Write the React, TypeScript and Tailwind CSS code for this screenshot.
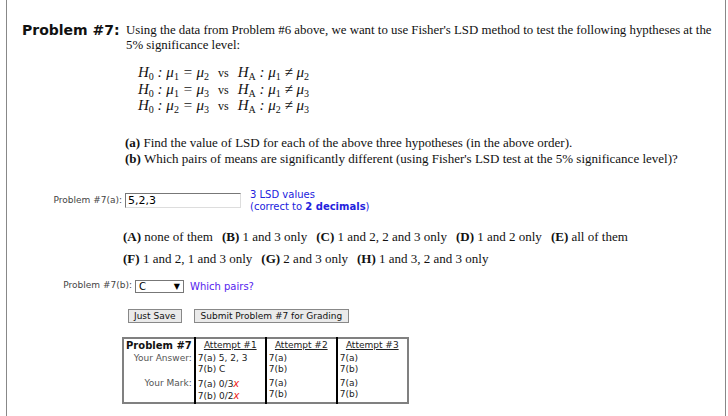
import React from 'react';

const serif = "font-['Liberation_Serif','Times_New_Roman',serif]";
const sans = "font-['DejaVu_Sans','Verdana',sans-serif]";

function Sub({ children }: { children: React.ReactNode }) {
  return <span className="not-italic text-[10px] relative top-[3px]">{children}</span>;
}

function Hyp({ a, b }: { a: string; b: string }) {
  return (
    <div className="italic text-[15px] leading-[14.5px] text-[#111] whitespace-nowrap">
      H<Sub>0</Sub>&nbsp;:&nbsp;μ<Sub>{a}</Sub> = μ<Sub>{b}</Sub>
      <span className="not-italic text-[12px]">&nbsp;&nbsp;&nbsp;vs&nbsp;&nbsp;&nbsp;</span>
      H<Sub>A</Sub>&nbsp;:&nbsp;μ<Sub>{a}</Sub> ≠ μ<Sub>{b}</Sub>
    </div>
  );
}

const options = [
  ['A', 'none of them'],
  ['B', '1 and 3 only'],
  ['C', '1 and 2, 2 and 3 only'],
  ['D', '1 and 2 only'],
  ['E', 'all of them'],
];
const options2 = [
  ['F', '1 and 2, 1 and 3 only'],
  ['G', '2 and 3 only'],
  ['H', '1 and 3, 2 and 3 only'],
];

function Opt({ k, t }: { k: string; t: string }) {
  return (
    <span className="mr-[9px]">
      <b>({k})</b> {t}
    </span>
  );
}

const cell = 'align-top border-l-2 border-black pl-[2px] pt-[2px] whitespace-nowrap';

export default function App() {
  return (
    <div className="w-[728px] h-[416px] bg-white overflow-hidden">
      <div className="ml-[6px] w-[720px] h-full border-x border-[#888] pt-[21px]">
        {/* Title */}
        <div className="flex">
          <div className={`${sans} w-[119px] pl-[15px] font-bold text-[14px] leading-[18px] text-[#111] whitespace-nowrap`}>
            Problem #7:
          </div>
          <div className={`${serif} w-[596px] text-[12.85px] leading-[15px] text-[#111] pt-[2px]`}>
            Using the data from Problem #6 above, we want to use Fisher's LSD method to test the following hyptheses at the 5% significance level:
          </div>
        </div>

        {/* Hypotheses */}
        <div className={`${serif} ml-[131px] mt-[12px]`}>
          <Hyp a="1" b="2" />
          <Hyp a="1" b="3" />
          <Hyp a="2" b="3" />
        </div>

        {/* Questions */}
        <div className={`${serif} ml-[118px] mt-[20px] text-[13px] leading-[16px] text-[#111]`}>
          <div><b>(a)</b> Find the value of LSD for each of the above three hypotheses (in the above order).</div>
          <div><b>(b)</b> Which pairs of means are significantly different (using Fisher's LSD test at the 5% significance level)?</div>
        </div>

        {/* Part a input */}
        <div className={`${sans} flex items-center mt-[22px]`}>
          <div className="w-[118px] text-right pr-[3px] text-[9px] text-[#444]">Problem #7(a):</div>
          <div className="w-[116px] h-[15px] border border-t-[#777] border-l-[#777] border-b-[#ddd] border-r-[#ddd] text-[11px] leading-[13px] pl-[2px] text-black">
            5,2,3
          </div>
          <div className="ml-[9px] text-[10px] leading-[12px] text-[#2222dd]">
            <div>3 LSD values</div>
            <div>(correct to <b>2 decimals</b>)</div>
          </div>
        </div>

        {/* Options */}
        <div className={`${serif} ml-[116px] mt-[13px] text-[13px] leading-[22px] text-[#111]`}>
          <div>
            {options.map(([k, t]) => (
              <Opt key={k} k={k} t={t} />
            ))}
          </div>
          <div>
            {options2.map(([k, t]) => (
              <Opt key={k} k={k} t={t} />
            ))}
          </div>
        </div>

        {/* Part b select */}
        <div className={`${sans} flex items-center mt-[9px]`}>
          <div className="w-[128px] text-right pr-[3px] text-[9px] text-[#444]">Problem #7(b):</div>
          <div className="w-[49px] h-[13px] border border-[#777] flex items-center justify-between px-[3px] text-[10px] leading-[11px] text-black">
            <span>C</span>
            <span className="text-[8px]">▼</span>
          </div>
          <div className="ml-[6px] text-[10px] text-[#5522ee]">Which pairs?</div>
        </div>

        {/* Buttons */}
        <div className={`${sans} flex ml-[121px] mt-[15px] gap-[12px]`}>
          <button className="h-[14px] px-[5px] border border-[#888] bg-[#eaeaea] text-[9px] leading-[12px] text-[#111]">Just Save</button>
          <button className="h-[14px] px-[6px] border border-[#888] bg-[#eaeaea] text-[9px] leading-[12px] text-[#111]">Submit Problem #7 for Grading</button>
        </div>

        {/* Results table */}
        <table className={`${sans} ml-[115px] mt-[14px] border-collapse border-2 border-[#808080] text-[9px] leading-[11px] text-[#222]`}>
          <tbody>
            <tr>
              <td className="w-[69px] text-center font-bold text-[10px] text-[#111] px-[2px] pt-[1px] whitespace-nowrap">Problem #7</td>
              <td className="w-[71px] border-l-2 border-black text-center underline pt-[1px] whitespace-nowrap">Attempt #1</td>
              <td className="w-[71px] border-l-2 border-black text-center underline pt-[1px] whitespace-nowrap">Attempt #2</td>
              <td className="w-[71px] border-l-2 border-black text-center underline pt-[1px] whitespace-nowrap">Attempt #3</td>
            </tr>
            <tr>
              <td className="align-top text-right pr-[2px] pt-[2px] text-[#555] whitespace-nowrap">Your Answer:</td>
              <td className={cell}>7(a) 5, 2, 3<br />7(b) C</td>
              <td className={cell}>7(a)<br />7(b)</td>
              <td className={cell}>7(a)<br />7(b)</td>
            </tr>
            <tr>
              <td className="align-top text-right pr-[2px] pt-[3px] text-[#555] whitespace-nowrap">Your Mark:</td>
              <td className={`${cell} pt-[3px]`}>
                7(a) 0/3<span className="text-[#ee2222] italic text-[10px]">x</span>
                <br />
                7(b) 0/2<span className="text-[#ee2222] italic text-[10px]">x</span>
              </td>
              <td className={`${cell} pt-[3px]`}>7(a)<br />7(b)</td>
              <td className={`${cell} pt-[3px]`}>7(a)<br />7(b)</td>
            </tr>
          </tbody>
        </table>
      </div>
    </div>
  );
}
